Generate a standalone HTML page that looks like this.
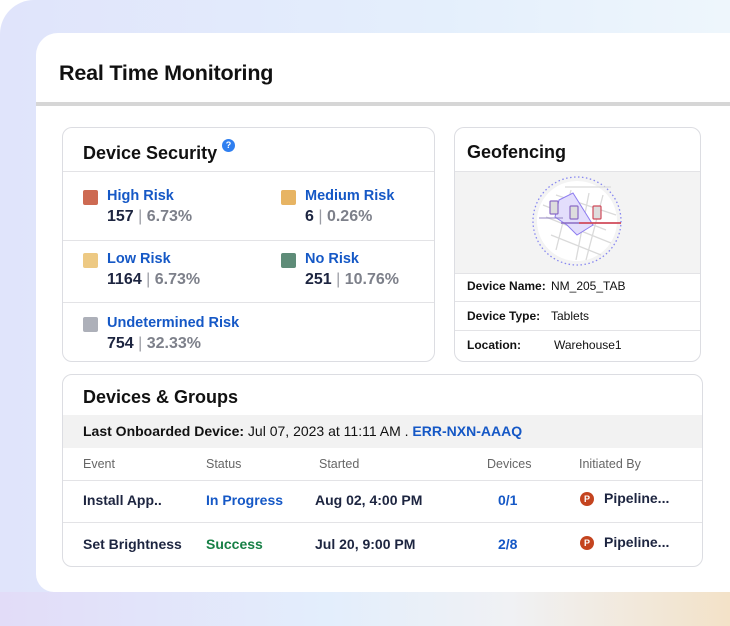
<!DOCTYPE html>
<html><head><style>
*{box-sizing:border-box;margin:0;padding:0}
body{width:730px;height:626px;overflow:hidden;font-family:"Liberation Sans",sans-serif;background:#fff;position:relative}
.bg{position:absolute;left:0;top:0;width:730px;height:626px;border-radius:34px 0 0 0;background:linear-gradient(90deg,#e0e4fb 0%,#e4effc 60%,#eef6fc 100%)}
.bot{position:absolute;left:0;top:592px;width:730px;height:34px;background:linear-gradient(90deg,#e2dcf8 0%,#e3eefc 45%,#f0f1f4 70%,#f3e2c8 100%)}
.card{position:absolute;left:36px;top:33px;width:694px;height:559px;background:#fff;border-radius:22px 0 0 18px}
.title{position:absolute;left:59px;top:61px;font-size:21.5px;font-weight:bold;color:#111;letter-spacing:-0.2px}
.hline{position:absolute;left:36px;top:102px;width:694px;height:4px;background:#d6d6d6}
.box{position:absolute;border:1px solid #dcdde2;border-radius:10px;background:#fff;overflow:hidden}
.h{font-size:18px;font-weight:bold;color:#111;position:absolute}
.sep{position:absolute;left:0;right:0;height:1px;background:#e3e3e6}
.item{position:absolute}
.sq{position:absolute;left:0;top:2px;width:15px;height:15px;border-radius:2px}
.lab{position:absolute;left:24px;top:0;font-size:14.5px;font-weight:bold;color:#1558c6;white-space:nowrap}
.val{position:absolute;left:24px;top:20px;font-size:16px;font-weight:bold;color:#1d2540;white-space:nowrap}
.val span{color:#7d808a}
.val i{font-style:normal;color:#9a9ca4;font-weight:normal}
.g{position:absolute;font-size:12px;color:#111;white-space:nowrap}
.g b{display:inline-block}
.t{position:absolute;font-size:14px;font-weight:bold;white-space:nowrap;color:#1d2540}
.th{position:absolute;font-size:12.5px;color:#666;white-space:nowrap}
.p{display:inline-block;width:14px;height:14px;border-radius:50%;background:#c4441f;color:#fff;font-size:9px;text-align:center;line-height:14px;margin-right:10px;vertical-align:1px}
</style></head><body>
<div class="bg"></div>
<div class="bot"></div>
<div class="card"></div>
<div class="title">Real Time Monitoring</div>
<div class="hline"></div>

<div class="box" style="left:62px;top:127px;width:373px;height:235px">
  <div class="h" style="left:20px;top:15px">Device Security</div>
  <div style="position:absolute;left:159px;top:11px;width:13px;height:13px;border-radius:50%;background:#2f7ff0;color:#fff;font-size:9px;font-weight:bold;text-align:center;line-height:13px">?</div>
  <div class="sep" style="top:43px"></div>
  <div class="sep" style="top:112px"></div>
  <div class="sep" style="top:174px"></div>
  <div class="item" style="left:20px;top:60px"><div class="sq" style="background:#cd6a52"></div><div class="lab">High Risk</div><div class="val">157 <i>|</i> <span>6.73%</span></div></div>
  <div class="item" style="left:218px;top:60px"><div class="sq" style="background:#e7b463"></div><div class="lab">Medium Risk</div><div class="val">6 <i>|</i> <span>0.26%</span></div></div>
  <div class="item" style="left:20px;top:123px"><div class="sq" style="background:#edc983"></div><div class="lab">Low Risk</div><div class="val">1164 <i>|</i> <span>6.73%</span></div></div>
  <div class="item" style="left:218px;top:123px"><div class="sq" style="background:#5e8c78"></div><div class="lab">No Risk</div><div class="val">251 <i>|</i> <span>10.76%</span></div></div>
  <div class="item" style="left:20px;top:187px"><div class="sq" style="background:#adb0b9"></div><div class="lab">Undetermined Risk</div><div class="val">754 <i>|</i> <span>32.33%</span></div></div>
</div>

<div class="box" style="left:454px;top:127px;width:247px;height:235px">
  <div class="h" style="left:12px;top:14px">Geofencing</div>
  <div style="position:absolute;left:0;top:43px;width:247px;height:102px;background:#f3f3f3;border-top:1px solid #e3e3e6"></div>
  <svg style="position:absolute;left:76px;top:47px" width="92" height="92" viewBox="0 0 92 92">
    <circle cx="46" cy="46" r="44" fill="none" stroke="#8787f0" stroke-width="1.3" stroke-dasharray="1.5 2.5"/>
    <circle cx="46" cy="46" r="40" fill="#fff"/>
    <g stroke="#dadada" stroke-width="1.3" fill="none">
      <path d="M12 30 L75 55 M15 42 L80 68 M25 20 L85 40 M20 60 L70 80 M40 15 L25 75 M58 18 L45 85 M72 20 L55 85 M34 12 L80 12"/>
    </g>
    <path d="M28 25 L42 18 L62 50 L46 60 L36 50 L24 42 Z" fill="#e3defc" stroke="#8d7cf0" stroke-width="1"/>
    <rect x="19" y="26" width="8" height="13" rx="1" fill="#ddd" stroke="#8a6bc4" stroke-width="1.2"/>
    <rect x="39" y="31" width="8" height="13" rx="1" fill="#ddd" stroke="#8a6bc4" stroke-width="1.2"/>
    <rect x="62" y="31" width="8" height="13" rx="1" fill="#ddd" stroke="#d04a5a" stroke-width="1.2"/>
    <path d="M8 43 L32 43" stroke="#8a7ac0" stroke-width="1.5" opacity=".6"/>
    <path d="M30 48 L48 48" stroke="#8a6bc4" stroke-width="1.6"/>
    <path d="M48 48 L90 48" stroke="#d04a5a" stroke-width="1.8"/>
  </svg>
  <div class="sep" style="top:145px"></div>
  <div class="g" style="left:12px;top:151px"><b style="width:84px">Device Name:</b>NM_205_TAB</div>
  <div class="sep" style="top:173px"></div>
  <div class="g" style="left:12px;top:181px"><b style="width:84px">Device Type:</b>Tablets</div>
  <div class="sep" style="top:202px"></div>
  <div class="g" style="left:12px;top:210px"><b style="width:87px">Location:</b>Warehouse1</div>
</div>

<div class="box" style="left:62px;top:374px;width:641px;height:193px">
  <div class="h" style="left:20px;top:12px">Devices &amp; Groups</div>
  <div style="position:absolute;left:0;top:40px;width:641px;height:33px;background:#f2f2f2"></div>
  <div style="position:absolute;left:20px;top:48px;font-size:14px;color:#111;white-space:nowrap"><b>Last Onboarded Device:</b> Jul 07, 2023 at 11:11 AM . <b style="color:#1558c6">ERR-NXN-AAAQ</b></div>
  <div class="th" style="left:20px;top:82px">Event</div>
  <div class="th" style="left:143px;top:82px">Status</div>
  <div class="th" style="left:256px;top:82px">Started</div>
  <div class="th" style="left:424px;top:82px">Devices</div>
  <div class="th" style="left:516px;top:82px">Initiated By</div>
  <div class="sep" style="top:105px"></div>
  <div class="t" style="left:20px;top:117px">Install App..</div>
  <div class="t" style="left:143px;top:117px;color:#1558c6">In Progress</div>
  <div class="t" style="left:252px;top:117px">Aug 02, 4:00 PM</div>
  <div class="t" style="left:435px;top:117px;color:#1558c6">0/1</div>
  <div class="t" style="left:517px;top:115px"><span class="p">P</span>Pipeline...</div>
  <div class="sep" style="top:147px"></div>
  <div class="t" style="left:20px;top:161px">Set Brightness</div>
  <div class="t" style="left:143px;top:161px;color:#178046">Success</div>
  <div class="t" style="left:252px;top:161px">Jul 20, 9:00 PM</div>
  <div class="t" style="left:435px;top:161px;color:#1558c6">2/8</div>
  <div class="t" style="left:517px;top:159px"><span class="p">P</span>Pipeline...</div>
</div>
</body></html>
